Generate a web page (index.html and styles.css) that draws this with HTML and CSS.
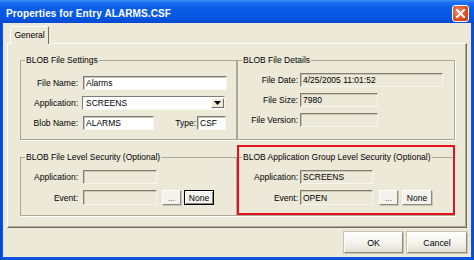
FILE: index.html
```html
<!DOCTYPE html>
<html lang="en">
<head>
    <meta charset="UTF-8">
    <title>Properties for Entry ALARMS.CSF</title>
    <link rel="stylesheet" href="styles.css">
</head>
<body>
    <div class="window">
        <div class="titlebar">
            <span class="title">Properties for Entry ALARMS.CSF</span>
            <span class="close">
                <svg width="15" height="15" viewBox="0 0 15 15"><path d="M4 4 L11 11 M11 4 L4 11" stroke="#fff" stroke-width="2" stroke-linecap="square"/></svg>
            </span>
        </div>
        <div class="client">
            <div class="tabs"><span class="tab">General</span></div>
            <div class="panel">
                <div class="groups">
                    <fieldset class="group left first">
                        <legend>BLOB File Settings</legend>
                        <div class="rows">
                            <div class="row"><label>File Name:</label><input class="field w144" value="Alarms"></div>
                            <div class="row">
                                <label>Application:</label>
                                <div class="combo"><span class="combo-text">SCREENS</span><span class="drop"><svg width="7" height="4" viewBox="0 0 7 4"><path d="M0 0 H7 L3.5 4 Z" fill="#000"/></svg></span></div>
                            </div>
                            <div class="row">
                                <label>Blob Name:</label><input class="field w71" value="ALARMS">
                                <label class="type">Type:</label><input class="field w29 tight" value="CSF">
                            </div>
                        </div>
                    </fieldset>
                    <fieldset class="group right">
                        <legend>BLOB File Details</legend>
                        <div class="rows">
                            <div class="row"><label>File Date:</label><input class="field ro w143" value="4/25/2005 11:01:52" readonly></div>
                            <div class="row"><label>File Size:</label><input class="field ro w78" value="7980" readonly></div>
                            <div class="row"><label>File Version:</label><input class="field ro w78" value="" readonly></div>
                        </div>
                    </fieldset>
                    <fieldset class="group left">
                        <legend>BLOB File Level Security (Optional)</legend>
                        <div class="rows">
                            <div class="row"><label>Application:</label><input class="field ro w74" value="" readonly></div>
                            <div class="row tall">
                                <label>Event:</label><input class="field ro w74" value="" readonly>
                                <button class="btn dots">...</button><button class="btn none default">None</button>
                            </div>
                        </div>
                    </fieldset>
                    <div class="highlight">
                        <fieldset class="group right">
                            <legend>BLOB Application Group Level Security (Optional)</legend>
                            <div class="rows">
                                <div class="row"><label>Application:</label><input class="field ro w73" value="SCREENS" readonly></div>
                                <div class="row tall">
                                    <label>Event:</label><input class="field ro w73" value="OPEN" readonly>
                                    <button class="btn dots wide">...</button><button class="btn none">None</button>
                                </div>
                            </div>
                        </fieldset>
                    </div>
                </div>
            </div>
            <div class="actions">
                <button class="push ok">OK</button>
                <button class="push cancel">Cancel</button>
            </div>
        </div>
    </div>
</body>
</html>
```

FILE: styles.css
```css
* { box-sizing: border-box; }
body { margin: 0; font-family: "Liberation Sans", Arial, sans-serif; font-size: 8.5px; color: #000; }

.window { width: 474px; height: 260px; display: flex; flex-direction: column; background: linear-gradient(to right, #0640c8, #0a54e0 2px, #0a54e0 calc(100% - 2px), #0640c8); }
.titlebar { height: 23px; padding: 3px 5px 0 6px; display: flex; align-items: center; justify-content: space-between; background: linear-gradient(#3d8ef7 0, #1a6cf0 3px, #0a5ce6 9px, #0657e3 17px, #0349cf 23px); }
.title { color: #fff; font-size: 10px; font-weight: bold; letter-spacing: 0.1px; }
.close { width: 17px; height: 17px; border: 1px solid #fff; border-radius: 3px; background: radial-gradient(circle at 35% 35%, #f08a66, #dd4a22 60%, #c2381a); display: flex; align-items: center; justify-content: center; }

.client { flex: 1; margin: 0 3px 3px; padding: 3px 4px 4px; background: #ece9d8; display: flex; flex-direction: column; }
.tabs { height: 17px; padding-left: 3px; display: flex; }
.tab { position: relative; z-index: 1; width: 39px; height: 18px; border: 1px solid; border-color: #fff #716f64 transparent #fff; border-bottom: 0; border-radius: 2px 2px 0 0; background: #ece9d8; text-align: center; line-height: 17px; }
.panel { height: 185px; border: 1px solid; border-color: #fff #716f64 #716f64 #fff; box-shadow: inset -1px -1px #aca899; padding: 11px 0 0 12px; }

.groups { display: grid; grid-template-columns: 217px 218px; grid-template-rows: 85px 64px; row-gap: 12px; }
.group { margin: 0; padding: 0; min-width: 0; border: 1px solid #aca899; box-shadow: 1px 1px #fff; }
.group legend { margin-left: 4px; padding: 0 1px; line-height: 10px; }
.group.first .rows { padding-top: 11px; }
.group .rows { padding-top: 8px; display: flex; flex-direction: column; gap: 6px; }
.row { height: 14px; display: flex; align-items: center; }
.row.tall { height: 15px; }
.row label { text-align: right; flex: none; }
.left label { width: 57px; margin-right: 5px; }
.right label { width: 60px; margin-right: 2px; }
.left label.type { width: 40px; margin-left: 2px; margin-right: 1px; }

.field { height: 100%; padding: 0 2px; font: inherit; color: #000; background: #fff; border: 1px solid; border-color: #7f7d72 #f6f5f0 #f6f5f0 #7f7d72; box-shadow: inset 1px 1px #c9c6b6; outline: none; }
.field.ro { background: #ece9d8; }
.w144 { width: 144px; }
.w143 { width: 143px; }
.w78 { width: 78px; }
.w74 { width: 74px; }
.w73 { width: 73px; }
.w71 { width: 71px; }
.w29 { width: 29px; }

.combo { width: 143px; height: 14px; margin-left: -1px; padding: 1px 0 1px 1px; display: flex; background: #fff; border: 1px solid; border-color: #7f7d72 #f6f5f0 #f6f5f0 #7f7d72; }
.combo-text { flex: 1; padding-left: 2px; line-height: 10px; }
.drop { width: 13px; display: flex; align-items: center; justify-content: center; background: #ece9d8; border: 1px solid; border-color: #fff #716f64 #716f64 #fff; }

.btn { height: 15px; padding: 0; font: inherit; color: #000; background: #f3f2ec; border: 1px solid; border-color: #fff #8e8b7c #8e8b7c #fff; box-shadow: 1px 1px #c9c6b6; }
.btn.dots { width: 19px; margin-left: 5px; color: #555; }
.btn.dots.wide { margin-left: 6px; }
.btn.none { width: 30px; margin-left: 3px; }
.right .btn.none { margin-left: 4px; }
.btn.default { border: 1px solid #000; box-shadow: inset 1px 1px #fff, inset -1px -1px #8e8b7c; }

.highlight { position: relative; display: flex; }
.highlight .group { flex: 1; }
.highlight::after { content: ""; position: absolute; top: -7px; left: 0; right: 0; bottom: 1px; border: 2px solid #e3141c; pointer-events: none; }

.actions { margin-top: 4px; height: 21px; display: flex; justify-content: flex-end; gap: 4px; }
.push { height: 21px; padding: 0; font: inherit; font-size: 8.8px; color: #000; background: linear-gradient(#fdfdfb, #f1f0ea 60%, #e2dfd2); border: 1px solid; border-color: #fbfbf8 #8e8b7c #8e8b7c #fbfbf8; box-shadow: 0 0 0 1px #c7c4b4; }
.push.ok { width: 59px; }
.push.cancel { width: 60px; }
```
